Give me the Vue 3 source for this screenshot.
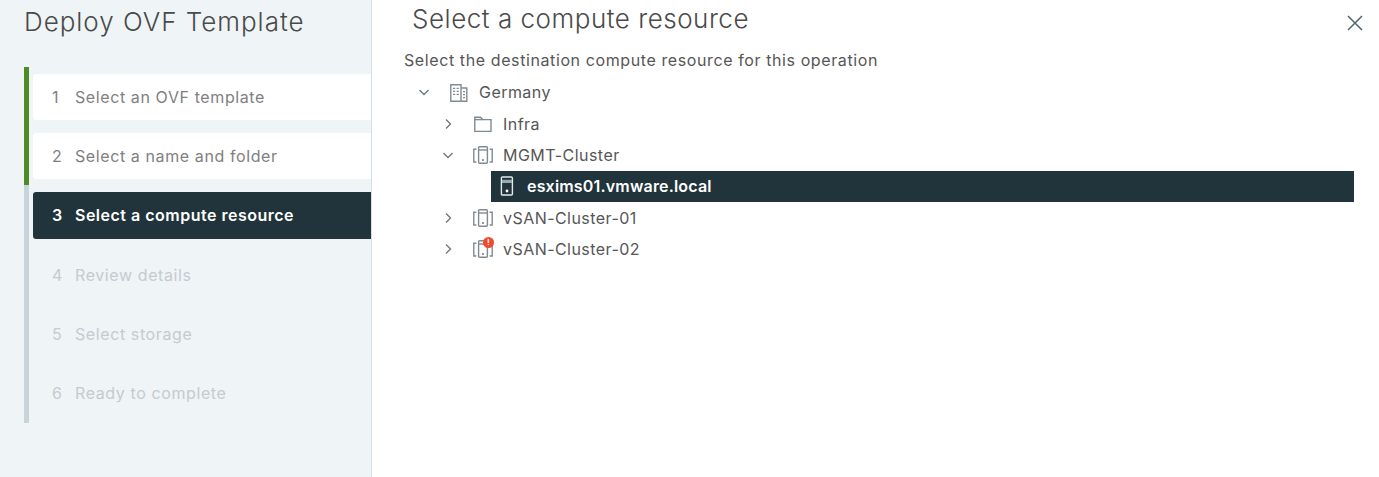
<template>
  <div class="wizard">
    <aside class="sidebar">
      <h1 class="wizard-title">Deploy OVF Template</h1>
      <ol class="steps">
        <li
          v-for="(step, idx) in steps"
          :key="step"
          class="step"
          :class="stepClass(idx)"
        >
          <span class="step-no">{{ idx + 1 }}</span>
          <span class="step-label">{{ step }}</span>
        </li>
      </ol>
    </aside>
    <main class="content">
      <header class="content-header">
        <h2 class="content-title">Select a compute resource</h2>
        <svg class="close" viewBox="0 0 18 18" width="18" height="18">
          <path d="M2 2 L16 16 M16 2 L2 16" stroke="#4f6470" stroke-width="1.5" fill="none" />
        </svg>
      </header>
      <p class="hint">Select the destination compute resource for this operation</p>
      <ul class="tree">
        <li
          v-for="node in nodes"
          :key="node.label"
          class="tree-row"
          :style="{ paddingLeft: node.depth * 24 + 'px' }"
        >
          <span class="caret">
            <svg v-if="node.caret" viewBox="0 0 12 12" width="12" height="12">
              <path
                :d="node.caret === 'open' ? 'M1.5 4 L6 8.5 L10.5 4' : 'M4 1.5 L8.5 6 L4 10.5'"
                stroke="#6b7a84"
                stroke-width="1.4"
                fill="none"
              />
            </svg>
          </span>
          <div class="node" :class="{ selected: node.selected }">
            <span class="node-icon">
              <svg v-if="node.icon === 'building'" viewBox="0 0 20 20" width="20" height="20" fill="none" stroke="#7f8a92" stroke-width="1.4">
                <path d="M1.8 2.8 H12 V19.2 H1.8 Z" />
                <path d="M12 6 H17.8 V19.2 H12" />
                <path d="M4 6.4 H6.2 M7.6 6.4 H9.8 M4 9.4 H6.2 M7.6 9.4 H9.8 M4 12.4 H6.2 M7.6 12.4 H9.8 M14 9.6 H16 M14 12.6 H16 M14 15.6 H16" stroke-width="1.2" />
              </svg>
              <svg v-else-if="node.icon === 'folder'" viewBox="0 0 20 20" width="20" height="20" fill="none" stroke="#7f8a92" stroke-width="1.4">
                <path d="M1.8 3.2 H7.6 L9.6 5.6 H18 V17.4 H1.8 Z" />
                <path d="M1.8 5.6 H9.6" />
              </svg>
              <svg v-else-if="node.icon === 'cluster'" viewBox="0 0 20 20" width="20" height="20" fill="none" stroke="#7f8a92" stroke-width="1.4">
                <rect x="5.6" y="1.8" width="8.8" height="16.4" rx="1" />
                <path d="M6 5 H14" />
                <path d="M3.4 4.2 H0.8 V17 H3.4 M16.6 4.2 H19.2 V17 H16.6" />
                <circle cx="10" cy="15" r="1" fill="#6f7b83" stroke="none" />
              </svg>
              <svg v-else viewBox="0 0 20 20" width="20" height="20" fill="none" stroke="#e4e9ec" stroke-width="1.4">
                <rect x="4.4" y="1" width="11" height="18" rx="1" />
                <path d="M5 3.8 H15 V7 H5 Z" fill="#9aa7ae" stroke="none" />
                <circle cx="10" cy="15" r="1.4" fill="#fff" stroke="none" />
              </svg>
              <span v-if="node.alert" class="alert">!</span>
            </span>
            <span class="node-label">{{ node.label }}</span>
          </div>
        </li>
      </ul>
    </main>
  </div>
</template>

<script setup>
const steps = [
  'Select an OVF template',
  'Select a name and folder',
  'Select a compute resource',
  'Review details',
  'Select storage',
  'Ready to complete'
]

const currentStep = 2

const nodes = [
  { label: 'Germany', depth: 0, caret: 'open', icon: 'building' },
  { label: 'Infra', depth: 1, caret: 'closed', icon: 'folder' },
  { label: 'MGMT-Cluster', depth: 1, caret: 'open', icon: 'cluster' },
  { label: 'esxims01.vmware.local', depth: 2, icon: 'host', selected: true },
  { label: 'vSAN-Cluster-01', depth: 1, caret: 'closed', icon: 'cluster' },
  { label: 'vSAN-Cluster-02', depth: 1, caret: 'closed', icon: 'cluster', alert: true }
]

function stepClass(idx) {
  if (idx < currentStep) return 'done'
  if (idx === currentStep) return 'current'
  return 'todo'
}
</script>

<style scoped>
.wizard {
  display: flex;
  width: 1379px;
  height: 477px;
  overflow: hidden;
  background: #fff;
  font-family: Inter, "Liberation Sans", sans-serif;
  color: #565656;
}

.sidebar {
  width: 372px;
  flex-shrink: 0;
  box-sizing: border-box;
  padding-left: 24px;
  background: #eff4f7;
  border-right: 1px solid #d5dfe6;
}

.wizard-title {
  margin: 0;
  height: 67px;
  padding-top: 4px;
  box-sizing: border-box;
  font-size: 26px;
  line-height: 36px;
  font-weight: 300;
  letter-spacing: 0.97px;
  color: #4a4a4a;
}

.steps {
  list-style: none;
  margin: 0;
  padding: 0;
}

.step {
  position: relative;
  display: flex;
  align-items: center;
  height: 59.2px;
  box-sizing: border-box;
  border-left: 5px solid #c9d4da;
  font-size: 16px;
  letter-spacing: 0.6px;
}

.step.done {
  border-left-color: #4e8a26;
  color: #808080;
}

.step.current {
  color: #fff;
  font-weight: 600;
  letter-spacing: 0.5px;
}

.step.todo {
  padding-top: 1px;
  color: #c5cbd0;
}

.step:last-child {
  height: 60.2px;
  padding-bottom: 1px;
}

.step.done::before,
.step.current::before {
  content: "";
  position: absolute;
  left: 4px;
  right: 0;
  top: 7px;
  bottom: 6px;
  border-radius: 3px 0 0 3px;
  background: #fff;
}

.step.current::before {
  background: #21333b;
}

.step-no {
  position: relative;
  width: 46px;
  padding-left: 23px;
  box-sizing: border-box;
}

.step-label {
  position: relative;
}

.content {
  flex: 1;
  min-width: 0;
  padding: 0 25px 0 32px;
}

.content-header {
  display: flex;
  align-items: flex-start;
  justify-content: space-between;
  height: 47px;
}

.content-title {
  margin: 0;
  padding-left: 8px;
  font-size: 26px;
  line-height: 38px;
  font-weight: 300;
  letter-spacing: 0.52px;
  color: #4a4a4a;
}

.close {
  margin-top: 14px;
  margin-right: -10px;
}

.hint {
  margin: 0;
  height: 29.5px;
  font-size: 16px;
  line-height: 26px;
  letter-spacing: 0.6px;
  color: #565656;
}

.tree {
  list-style: none;
  margin: 0;
  padding: 0 0 0 12px;
}

.tree-row {
  display: flex;
  align-items: center;
  height: 31.4px;
  font-size: 16px;
  letter-spacing: 0.45px;
}

.caret {
  display: flex;
  width: 33px;
  flex-shrink: 0;
  padding-left: 2px;
  box-sizing: border-box;
}

.node {
  flex: 1;
  display: flex;
  align-items: center;
  height: 31px;
}

.node-icon {
  position: relative;
  display: flex;
  width: 20px;
  height: 20px;
  margin-right: 10px;
}

.selected {
  margin-left: -6px;
  padding-left: 6px;
  background: #21333b;
  color: #fff;
  font-weight: 600;
  letter-spacing: 0.18px;
}

.alert {
  position: absolute;
  top: -2px;
  right: -1px;
  width: 11px;
  height: 11px;
  border-radius: 50%;
  background: #f0492e;
  color: #fff;
  font-size: 8px;
  line-height: 11px;
  font-weight: 700;
  text-align: center;
}
</style>
